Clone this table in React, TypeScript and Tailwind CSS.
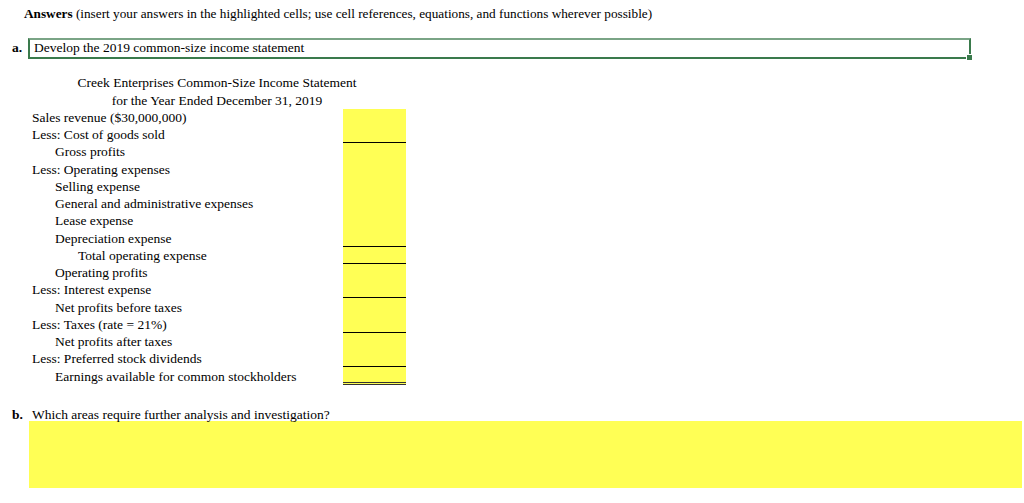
const rows: { label: string; indent: number; line?: "single" | "double" }[] = [
  { label: "Sales revenue ($30,000,000)", indent: 0 },
  { label: "Less: Cost of goods sold", indent: 0, line: "single" },
  { label: "Gross profits", indent: 1 },
  { label: "Less: Operating expenses", indent: 0 },
  { label: "Selling expense", indent: 1 },
  { label: "General and administrative expenses", indent: 1 },
  { label: "Lease expense", indent: 1 },
  { label: "Depreciation expense", indent: 1, line: "single" },
  { label: "Total operating expense", indent: 2, line: "single" },
  { label: "Operating profits", indent: 1 },
  { label: "Less: Interest expense", indent: 0, line: "single" },
  { label: "Net profits before taxes", indent: 1 },
  { label: "Less: Taxes (rate = 21%)", indent: 0, line: "single" },
  { label: "Net profits after taxes", indent: 1 },
  { label: "Less: Preferred stock dividends", indent: 0, line: "single" },
  { label: "Earnings available for common stockholders", indent: 1, line: "double" },
];

const indents = ["pl-[4px]", "pl-[27px]", "pl-[50px]"];

export default function App() {
  return (
    <div
      className="w-[1024px] h-[503px] bg-white text-black overflow-hidden"
      style={{ fontFamily: '"Liberation Serif", "Times New Roman", serif' }}
    >
      <div className="pt-[6px] pl-[24px] text-[13.25px] leading-[16px]">
        <b>Answers</b> (insert your answers in the highlighted cells; use cell references, equations, and functions wherever possible)
      </div>

      <div className="mt-[16px] flex items-center text-[13.5px]">
        <div className="w-[28px] pl-[12px] font-bold">a.</div>
        <div className="relative w-[943px] h-[21px] border-t-2 border-l-2 border-b-2 border-r-2 border-t-[#7aa486] border-[#3a7a4c] flex items-center pl-[4px]">
          Develop the 2019 common-size income statement
          <div className="absolute right-[-4px] bottom-[-4px] w-[5px] h-[5px] bg-[#3a7a4c] border border-white box-content" />
        </div>
      </div>

      <div className="mt-[15px] pl-[28px] text-[13.5px] leading-[16px]">
        <div className="w-[378px] h-[17.25px] flex items-end justify-center">
          Creek Enterprises Common-Size Income Statement
        </div>
        <div className="w-[378px] h-[17.25px] flex items-end justify-center">
          for the Year Ended December 31, 2019
        </div>
        {rows.map((r) => (
          <div key={r.label} className="flex h-[17.25px]">
            <div className={`w-[315px] flex items-end whitespace-nowrap ${indents[r.indent]}`}>{r.label}</div>
            <div
              className={`w-[63px] bg-[#ffff55] ${
                r.line === "single"
                  ? "border-b border-black"
                  : r.line === "double"
                  ? "border-b-[3px] border-double border-[#333]"
                  : ""
              }`}
            />
          </div>
        ))}
      </div>

      <div className="mt-[22px] flex text-[13.5px] leading-[16px] h-[14px]">
        <div className="w-[32px] pl-[12px] font-bold">b.</div>
        <div>Which areas require further analysis and investigation?</div>
      </div>
      <div className="ml-[29px] w-[993px] h-[67px] bg-[#ffff55]" />
    </div>
  );
}
